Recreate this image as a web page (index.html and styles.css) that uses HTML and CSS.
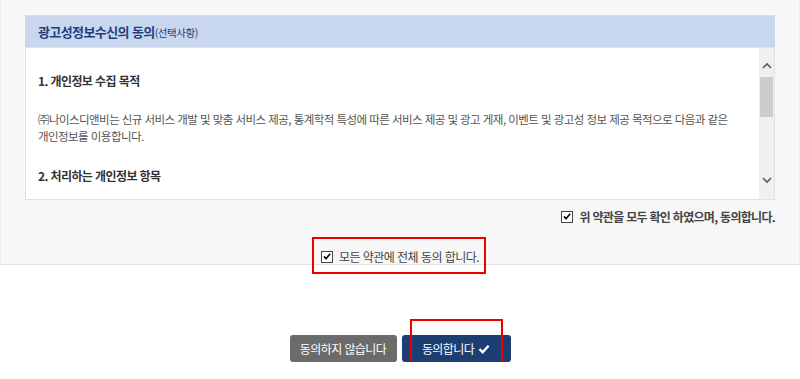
FILE: index.html
```html
<!DOCTYPE html>
<html lang="ko">
<head>
    <meta charset="UTF-8">
    <meta name="viewport" content="width=device-width, initial-scale=1.0">
    <title>광고성정보수신 동의</title>
    <link rel="stylesheet" href="styles.css">
</head>
<body>
    <div class="agree-wrap">
        <div class="terms-head">
            <span class="terms-title">광고성정보수신의 동의</span><span class="terms-sub">(선택사항)</span>
        </div>

        <div class="terms-box">
            <div class="terms-content">
                <h4 class="terms-h">1. 개인정보 수집 목적</h4>
                <p class="terms-p">㈜나이스디앤비는 신규 서비스 개발 및 맞춤 서비스 제공, 통계학적 특성에 따른 서비스 제공 및 광고 게재, 이벤트 및 광고성 정보 제공 목적으로 다음과 같은 개인정보를 이용합니다.</p>
                <h4 class="terms-h">2. 처리하는 개인정보 항목</h4>
            </div>
            <div class="scrollbar">
                <svg class="sb-arrow sb-up" width="10" height="7" viewBox="0 0 10 7">
                    <path d="M1 6 L5 2 L9 6" fill="none" stroke="#5a5a5a" stroke-width="1.6"/>
                </svg>
                <div class="sb-thumb"></div>
                <div class="sb-space"></div>
                <svg class="sb-arrow sb-down" width="10" height="7" viewBox="0 0 10 7">
                    <path d="M1 1 L5 5 L9 1" fill="none" stroke="#5a5a5a" stroke-width="1.6"/>
                </svg>
            </div>
        </div>

        <div class="confirm-row">
            <label class="check-label">
                <span class="check-box">
                    <svg width="11" height="11" viewBox="0 0 11 11">
                        <path d="M2.2 5.4 L4.4 8 L9 2.4" fill="none" stroke="#111" stroke-width="1.9"/>
                    </svg>
                </span>
                위 약관을 모두 확인 하였으며, 동의합니다.
            </label>
        </div>

        <div class="all-row">
            <label class="all-label">
                <span class="check-box">
                    <svg width="11" height="11" viewBox="0 0 11 11">
                        <path d="M2.2 5.4 L4.4 8 L9 2.4" fill="none" stroke="#111" stroke-width="1.9"/>
                    </svg>
                </span>
                모든 약관에 전체 동의 합니다.
            </label>
        </div>
    </div>

    <div class="btn-row">
        <button class="btn btn-no" type="button">동의하지 않습니다</button>
        <button class="btn btn-yes" type="button">동의합니다
            <svg width="12" height="10" viewBox="0 0 12 10">
                <path d="M1.5 5.2 L4.6 8.2 L10.6 1.8" fill="none" stroke="#fff" stroke-width="2.4"/>
            </svg>
        </button>
    </div>
</body>
</html>
```

FILE: styles.css
```css
* {
    margin: 0;
    padding: 0;
    box-sizing: border-box;
}

body {
    font-family: "Noto Sans CJK KR", "Malgun Gothic", sans-serif;
    font-size: 12px;
    letter-spacing: -0.6px;
    color: #555;
    background: #fff;
}

.agree-wrap {
    background: #f7f7f7;
    border-left: 1px solid #ebebeb;
    border-right: 1px solid #ebebeb;
    border-bottom: 1px solid #e3e3e3;
    padding: 15px 24px 0 24px;
}

.terms-head {
    height: 32px;
    line-height: 31px;
    background: #c9d7ee;
    border-top: 1px solid #d3def0;
    padding-left: 13px;
    color: #1e3f7f;
}

.terms-title {
    font-size: 13px;
    font-weight: bold;
    letter-spacing: -0.6px;
}

.terms-sub {
    font-size: 10.5px;
    letter-spacing: -0.4px;
}

.terms-box {
    display: flex;
    height: 153px;
    background: #fff;
    border: 1px solid #e2e2e2;
}

.terms-content {
    flex: 1;
    overflow: hidden;
    padding: 24px 12px 0 12px;
    word-break: keep-all;
}

.terms-h {
    font-size: 12px;
    font-weight: bold;
    line-height: 17px;
    color: #333;
    margin-bottom: 22px;
}

.terms-p {
    font-size: 11.5px;
    letter-spacing: -0.55px;
    line-height: 17px;
    margin-bottom: 22px;
}

.scrollbar {
    width: 15px;
    background: #f0f0f0;
    display: flex;
    flex-direction: column;
    align-items: center;
}

.sb-up {
    margin-top: 14px;
}

.sb-thumb {
    width: 13px;
    height: 40px;
    margin-top: 8px;
    background: #cdcdcd;
}

.sb-space {
    flex: 1;
}

.sb-down {
    margin-bottom: 15px;
}

.confirm-row {
    display: flex;
    justify-content: flex-end;
    margin-top: 8px;
    line-height: 17px;
}

.check-label,
.all-label {
    display: flex;
    align-items: center;
    gap: 6px;
}

.check-label {
    font-weight: bold;
    letter-spacing: -0.7px;
    color: #444;
}

.check-box {
    display: flex;
    width: 12px;
    height: 12px;
    border: 1px solid #444;
    background: #fff;
    align-items: center;
    justify-content: center;
}

.all-row {
    display: flex;
    justify-content: center;
    margin-top: 24px;
    line-height: 15px;
}

.all-label {
    position: relative;
    letter-spacing: -0.55px;
    color: #444;
}

.all-label::after {
    content: "";
    position: absolute;
    top: -12px;
    bottom: -10px;
    left: -9px;
    right: -7px;
    border: 2px solid #e00;
}

.btn-row {
    display: flex;
    justify-content: center;
    gap: 5px;
    padding-top: 70px;
}

.btn {
    height: 27px;
    border: none;
    border-radius: 3px;
    color: #fff;
    font-family: inherit;
    font-size: 12px;
    letter-spacing: -0.6px;
    display: flex;
    align-items: center;
    justify-content: center;
    gap: 4px;
}

.btn-no {
    width: 107px;
    background: #6b6b6b;
}

.btn-yes {
    position: relative;
    width: 109px;
    background: #1c3e72;
}

.btn-yes::after {
    content: "";
    position: absolute;
    top: -16px;
    bottom: -13px;
    left: 8px;
    right: 8px;
    border: 2px solid #e00;
}
```
